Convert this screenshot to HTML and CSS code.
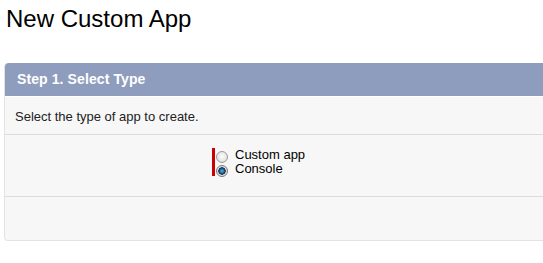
FILE: index.html
```html
<!DOCTYPE html>
<html lang="en">
<head>
  <meta charset="UTF-8" />
  <title>New Custom App</title>
  <link rel="stylesheet" href="styles.css">
</head>
<body>
  <h1 class="page-title">New Custom App</h1>

  <div class="step-panel">
    <div class="step-header">Step 1. Select Type</div>
    <div class="step-row intro">Select the type of app to create.</div>
    <div class="step-row choices">
      <div class="required-group">
        <label class="choice"><input type="radio" name="apptype" value="custom"> <span>Custom app</span></label>
        <label class="choice"><input type="radio" name="apptype" value="console" checked> <span>Console</span></label>
      </div>
    </div>
    <div class="step-row footer"></div>
  </div>
</body>
</html>
```

FILE: styles.css
```css
body {
  margin: 0;
  font-family: "Liberation Sans", Arial, sans-serif;
  color: #000;
  background: #fff;
}
.page-title {
  margin: 5px 0 0 6px;
  font-size: 24px;
  line-height: 28px;
  font-weight: normal;
}
/* panel (runs on past the right edge, so no right border) */
.step-panel {
  margin: 30px 0 0 4px;
  background: #f7f7f7;
  border: 1px solid #e3e3e3;
  border-top: 0;
  border-right: 0;
  border-radius: 4px 0 0 4px;
}
.step-header {
  height: 33px;
  line-height: 33px;
  padding-left: 12px;
  background: #8e9dbe;
  color: #fff;
  font-size: 14px;
  font-weight: bold;
  letter-spacing: 0.1px;
  border-bottom: 1px solid #fff;
  border-radius: 4px 0 0 0;
}
.step-row {
  border-bottom: 1px solid #dcdcdc;
}
.intro {
  padding: 12px 0 10px 10px;
  font-size: 13px;
  line-height: 15px;
  color: #222;
}
.choices {
  padding: 13px 0 20px 207px;
}
.footer {
  height: 43px;
  border-bottom: 0;
}
/* required radio group */
.required-group {
  border-left: 3px solid #c00;
  padding-left: 1px;
}
.choice {
  display: flex;
  align-items: flex-start;
  height: 14px;
  font-size: 13px;
  line-height: 14px;
  color: #000;
}
.choice span {
  margin-left: 7px;
}
.choice input {
  appearance: none;
  -webkit-appearance: none;
  width: 12px;
  height: 12px;
  margin: 3px 0 0 0;
  border: 1px solid #9c9c9c;
  border-radius: 50%;
  background: radial-gradient(circle at 50% 45%, #fbfbfb 0, #ececec 45%, #d4d4d4 100%);
  box-sizing: border-box;
}
.choice input:checked {
  border-color: #7a7a7a;
  background: radial-gradient(circle at 50% 50%, #5bb0e6 0, #1f6fa8 2px, #173a55 3px, #2c3e4c 3.5px, #e4e4e4 4px, #cfcfcf 100%);
}
```
